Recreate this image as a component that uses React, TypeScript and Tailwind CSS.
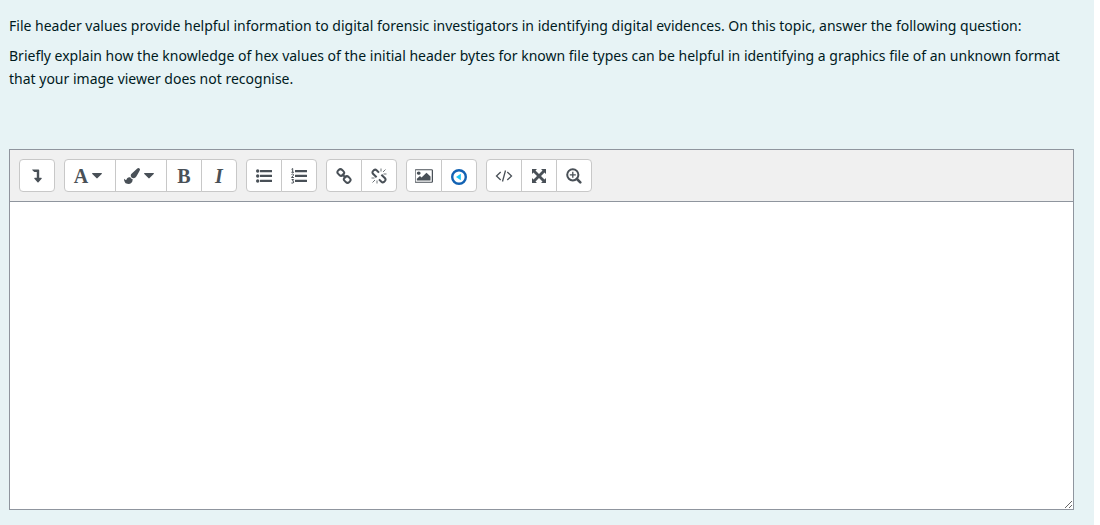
import type { ReactNode } from "react";

interface Tool { label: string; icon: ReactNode; menu?: boolean }

const Caret = () => (
  <svg width="10" height="6" viewBox="0 0 10 6" fill="currentColor"><path d="M.6 0h8.8q.9.3.3 1L5.6 5.1q-.6.6-1.2 0L.3 1Q-.3.3.6 0z"/></svg>
);

const groups: Tool[][] = [
  [
    { label: "Show more buttons", icon: <svg width="10" height="14" viewBox="0 0 10 14" fill="currentColor"><path d="M.4.5h6.100q.7 0 .7.7v7.600h2q.9.200.4 1L6.500 13.200q-.5.5-1 0L2.400 9.800q-.5-.8.4-1h2V3H2.300L.2.900Q0 .5.4.5z"/></svg> },
  ],
  [
    { label: "Paragraph styles", menu: true, icon: <span className="font-['Liberation_Serif',serif] text-xl leading-5 font-bold">A</span> },
    { label: "Font colour", menu: true, icon: <svg width="16" height="16" viewBox="0 0 1792 1792" fill="currentColor"><path d="M1615 0q70 0 122.500 46.500t52.500 116.500q0 63-45 151-332 629-465 752-97 91-218 91-126 0-216.500-92.500t-90.500-219.500q0-128 92-212l638-579q59-54 130-54zm-909 1034q39 76 106.500 130t150.500 76l1 71q4 213-129.500 347t-348.500 134q-123 0-218-46.500t-152.500-127.500-86.500-183-29-220q7 5 41 30t62 44.500 59 36.500 46 17q41 0 55-37 25-66 57.500-112.500t69.500-76 88-47.500 103-25.500 125-10.500z"/></svg> },
    { label: "Bold", icon: <span className="font-['Liberation_Serif',serif] text-xl leading-5 font-bold">B</span> },
    { label: "Italic", icon: <span className="font-['Liberation_Serif',serif] text-xl leading-5 font-bold italic">I</span> },
  ],
  [
    { label: "Unordered list", icon: <svg width="16" height="14" viewBox="0 0 16 14" fill="currentColor"><circle cx="1.700" cy="2" r="1.700"/><circle cx="1.700" cy="7" r="1.700"/><circle cx="1.700" cy="12" r="1.700"/><rect x="4" y="1" width="12" height="2.300" rx=".3"/><rect x="4" y="5.800" width="12" height="2.300" rx=".3"/><rect x="4" y="10.700" width="12" height="2.300" rx=".3"/></svg> },
    { label: "Ordered list", icon: <svg width="16" height="16" viewBox="0 0 16 16" fill="currentColor"><rect x="4" y="2" width="12" height="2.300" rx=".3"/><rect x="4" y="6.800" width="12" height="2.300" rx=".3"/><rect x="4" y="11.700" width="12" height="2.300" rx=".3"/><path d="M.5 1.300 1.700.5V4M.4 4.300H3M.5 6.500q1-.9 1.900-.2.500.9-.6 1.700L.5 9.500h2.400M.6 11.500h2L1.500 13q1.300 0 1.300 1.100 0 1.400-2.400.9" fill="none" stroke="currentColor" strokeWidth="1"/></svg> },
  ],
  [
    { label: "Link", icon: <svg width="16" height="16" viewBox="0 0 16 16" fill="none" stroke="currentColor" strokeWidth="2"><rect x="1.500" y="1.700" width="6.600" height="5.600" rx="2.500" transform="rotate(45 4.800 4.500)"/><rect x="7.900" y="8.700" width="6.600" height="5.600" rx="2.500" transform="rotate(45 11.200 11.500)"/><path d="m6 6 4 4"/></svg> },
    { label: "Unlink", icon: <svg width="16" height="16" viewBox="0 0 16 16" fill="none" stroke="currentColor" strokeWidth="2"><path d="M5.600 9.300 2 5.800Q.9 4.400 2 3.100l1-1q1.300-1 2.600.1L8 4.600M8 11.400l2.400 2.400q1.300 1.100 2.600.1l1-1q1.100-1.300 0-2.700l-3.600-3.500"/><path d="M10 .5v3M14.500 1.500 12 4M12.500 6h3M.5 10h3M4 12l-2.500 2.500M6 12.500v3" strokeWidth=".8"/></svg> },
  ],
  [
    { label: "Insert image", icon: <svg width="18" height="16" viewBox="0 0 1856 1792" preserveAspectRatio="none" fill="currentColor"><path d="M576 576q0 80-56 136t-136 56-136-56-56-136 56-136 136-56 136 56 56 136zm1024 384v448h-1408v-192l320-320 160 160 512-512zm96-704h-1600q-13 0-22.500 9.500t-9.500 22.500v1216q0 13 9.500 22.500t22.500 9.500h1600q13 0 22.500-9.500t9.500-22.500v-1216q0-13-9.500-22.500t-22.500-9.500zm160 32v1216q0 66-47 113t-113 47h-1600q-66 0-113-47t-47-113v-1216q0-66 47-113t113-47h1600q66 0 113 47t47 113z"/></svg> },
    { label: "Insert media", icon: <svg className="mt-0.5" width="16" height="16" viewBox="0 0 16 16"><circle cx="8" cy="8" r="6.800" fill="#fff" stroke="#1262b3" strokeWidth="2.400"/><path d="M9.800 4.800v6.400L5 8z" fill="#18c5f4"/></svg> },
  ],
  [
    { label: "HTML", icon: <svg width="18" height="14" viewBox="0 0 18 14" fill="none" stroke="currentColor" strokeWidth="1.300"><path d="M5.700 3 1.500 7l4.200 4M12.300 3l4.200 4-4.200 4M10.500 1.500l-3 11"/></svg> },
    { label: "Full screen", icon: <svg width="16" height="16" viewBox="0 0 16 16" fill="currentColor"><path d="M1 1h5L4.500 2.500 8 6l3.500-3.500L10 1h5v5l-1.500-1.500L10 8l3.500 3.500L15 10v5h-5l1.500-1.500L8 10l-3.500 3.500L6 15H1v-5l1.500 1.500L6 8 2.500 4.500 1 6z"/></svg> },
    { label: "Zoom", icon: <svg width="16" height="16" viewBox="0 0 16 16" fill="none" stroke="currentColor"><circle cx="6.800" cy="6.800" r="5.600" strokeWidth="2"/><path d="m11 11 3.300 3.300" strokeWidth="2.600" strokeLinecap="round"/><path d="M3.800 6.800h6M6.800 3.800v6" strokeWidth="1.300"/></svg> },
  ],
];

function ToolButton({ label, icon, menu }: Tool) {
  return (
    <button type="button" title={label} aria-label={label}
      className={`flex items-center justify-center gap-1 h-[33px] -ml-px first:ml-0 border border-[#c8c8c8] bg-white text-[#495057] first:rounded-l last:rounded-r hover:bg-gray-50 cursor-pointer ${menu ? "w-[52px] pr-1" : "w-9"}`}>
      {icon}
      {menu && <Caret />}
    </button>
  );
}

export default function App() {
  return (
    <main className="min-h-screen mr-1.5 pt-3.5 pb-[15px] pl-[9px] pr-5 bg-[#e7f3f5] text-[#001a1e] font-['Noto_Sans',sans-serif]">
      {/* Question text */}
      <div className="text-sm leading-[23px]">
        <p className="mb-[7px]">File header values provide helpful information to digital forensic investigators in identifying digital evidences. On this topic, answer the following question:</p>
        <p>Briefly explain how the knowledge of hex values of the initial header bytes for known file types can be helpful in identifying a graphics file of an unknown format that your image viewer does not recognise.</p>
      </div>

      {/* Answer editor */}
      <div className="mt-[59px] border border-[#8f959e] bg-white">
        <div role="toolbar" aria-label="Editor" className="flex flex-wrap gap-[9px] p-[9px] border-b border-[#8f959e] bg-[#f0f0f0]">
          {groups.map((tools) => (
            <div key={tools[0].label} className="flex">
              {tools.map((tool) => <ToolButton key={tool.label} {...tool} />)}
            </div>
          ))}
        </div>
        <textarea aria-label="Answer text" className="block w-full h-[307px] p-2 text-sm resize-y outline-none" />
      </div>
    </main>
  );
}
